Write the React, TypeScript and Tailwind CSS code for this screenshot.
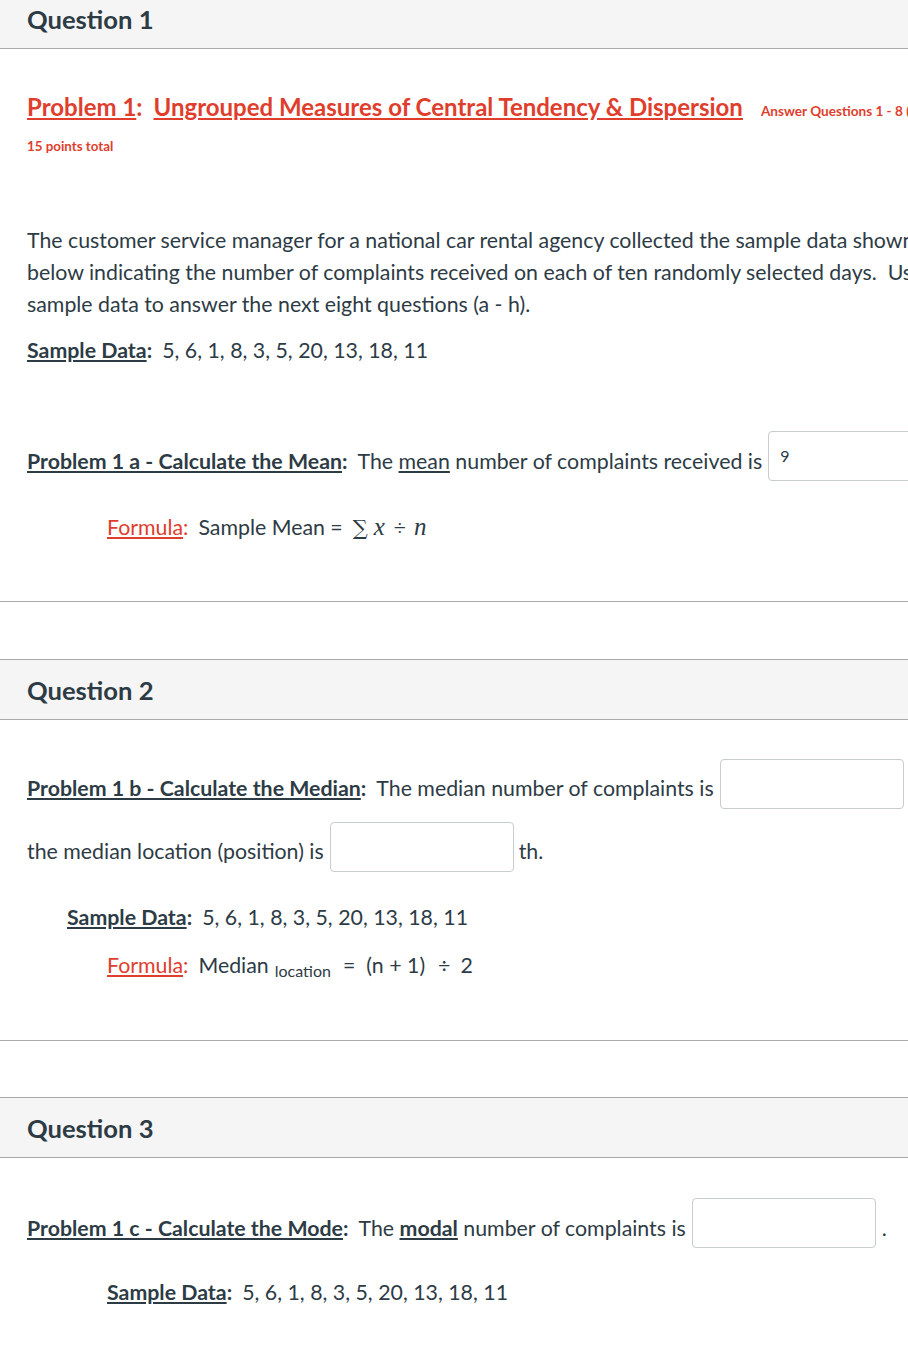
import React from 'react';

const red = 'text-[#e03e2d]';

const Header: React.FC<{ n: number }> = ({ n }) => (
    <div className="h-[61px] border-y border-[#aaaaaa] bg-[#f5f5f5] flex items-center px-[27px]">
        <h2 className="text-[25.6px] font-bold leading-[32px] text-[#2d3b45]">Question {n}</h2>
    </div>
);

const AnswerBox: React.FC<{ value?: string }> = ({ value }) => (
    <div className="h-[50px] w-[184px] shrink-0 rounded-[4px] border border-[#c7cdd1] bg-white px-[11px] pt-[12px] text-[16px] leading-[24px] text-[#2d3b45]">
        {value}
    </div>
);

const SampleData: React.FC<{ indent: string; top: string }> = ({ indent, top }) => (
    <p className={`${indent} ${top} leading-[32px] whitespace-nowrap`}>
        <span className="font-bold underline">Sample Data</span>
        <span className="font-bold">:</span>
        <span className="ml-[10px]">5, 6, 1, 8, 3, 5, 20, 13, 18, 11</span>
    </p>
);

const FormulaLabel = () => (
    <>
        <span className={`${red} underline`}>Formula</span>
        <span className={red}>:</span>
    </>
);

export default function App() {
    return (
        <div className="w-[908px] overflow-hidden bg-white font-['Lato',sans-serif] text-[21.33px] text-[#2d3b45]">
            <div className="w-[992px]">
                {/* Question 1 */}
                <section className="-mt-[12px] border-b border-[#aaaaaa]">
                    <Header n={1} />
                    <div className="px-[27px] pb-[58px]">
                        <p className={`mt-[40px] text-[24px] font-bold leading-[36px] whitespace-nowrap ${red}`}>
                            <span className="underline">Problem 1</span>
                            <span>:</span>
                            <span className="ml-[11px] underline">Ungrouped Measures of Central Tendency &amp; Dispersion</span>
                            <span className="ml-[18px] text-[13.6px] leading-[20px]">Answer Questions 1 - 8 (a - h) below</span>
                        </p>
                        <p className={`mt-[11px] text-[13.33px] font-bold leading-[20px] ${red}`}>15 points total</p>
                        <p className="mt-[68px] leading-[32px]">
                            The customer service manager for a national car rental agency collected the sample data shown
                            below indicating the number of complaints received on each of ten randomly selected days.&nbsp; Use
                            the sample data to answer the next eight questions (a - h).
                        </p>
                        <SampleData indent="" top="mt-[14px]" />
                        <div className="mt-[65px] flex items-start whitespace-nowrap">
                            <span className="mt-[14px] leading-[32px]">
                                <span className="font-bold underline">Problem 1 a - Calculate the Mean</span>
                                <span className="font-bold">:</span>
                                <span className="ml-[10px]">The </span>
                                <span className="underline">mean</span>
                                <span> number of complaints received is</span>
                            </span>
                            <div className="ml-[6px]">
                                <AnswerBox value="9" />
                            </div>
                        </div>
                        <p className="mt-[30px] h-[32px] pl-[80px] leading-[32px] whitespace-nowrap">
                            <FormulaLabel />
                            <span className="ml-[10px]">Sample Mean =</span>
                            <span className="ml-[10px] font-['DejaVu_Serif',serif] text-[21px] leading-none">∑</span>
                            <span className="ml-[6px] font-['Liberation_Serif',serif] italic text-[25px] leading-none">x</span>
                            <span className="ml-[9px] font-['Liberation_Serif',serif] text-[22px] leading-none">÷</span>
                            <span className="ml-[8px] font-['Liberation_Serif',serif] italic text-[25px] leading-none">n</span>
                        </p>
                    </div>
                </section>

                {/* Question 2 */}
                <section className="mt-[57px] border-b border-[#aaaaaa]">
                    <Header n={2} />
                    <div className="px-[27px] pb-[59px]">
                        <div className="mt-[39px] flex items-start whitespace-nowrap">
                            <span className="mt-[13px] leading-[32px]">
                                <span className="font-bold underline">Problem 1 b - Calculate the Median</span>
                                <span className="font-bold">:</span>
                                <span className="ml-[10px]">The median number of complaints is</span>
                            </span>
                            <div className="ml-[6px]">
                                <AnswerBox />
                            </div>
                        </div>
                        <div className="mt-[13px] flex items-start whitespace-nowrap">
                            <span className="mt-[13px] leading-[32px]">the median location (position) is</span>
                            <div className="ml-[6px]">
                                <AnswerBox />
                            </div>
                            <span className="ml-[5px] mt-[13px] leading-[32px]">th.</span>
                        </div>
                        <SampleData indent="pl-[40px]" top="mt-[29px]" />
                        <p className="mt-[16px] h-[32px] pl-[80px] leading-[32px] whitespace-nowrap">
                            <FormulaLabel />
                            <span className="ml-[10px]">Median</span>
                            <span className="ml-[6px] text-[16px] leading-none align-[-4px]">location</span>
                            <span className="ml-[12px]">=</span>
                            <span className="ml-[11px]">(n + 1)</span>
                            <span className="ml-[13px]">÷</span>
                            <span className="ml-[10px]">2</span>
                        </p>
                    </div>
                </section>

                {/* Question 3 */}
                <section className="mt-[56px]">
                    <Header n={3} />
                    <div className="px-[27px] pb-[60px]">
                        <div className="mt-[40px] flex items-start whitespace-nowrap">
                            <span className="mt-[14px] leading-[32px]">
                                <span className="font-bold underline">Problem 1 c - Calculate the Mode</span>
                                <span className="font-bold">:</span>
                                <span className="ml-[10px]">The </span>
                                <span className="font-bold underline">modal</span>
                                <span> number of complaints is</span>
                            </span>
                            <div className="ml-[6px]">
                                <AnswerBox />
                            </div>
                            <span className="ml-[6px] mt-[14px] leading-[32px]">.</span>
                        </div>
                        <SampleData indent="pl-[80px]" top="mt-[28px]" />
                    </div>
                </section>
            </div>
        </div>
    );
}
